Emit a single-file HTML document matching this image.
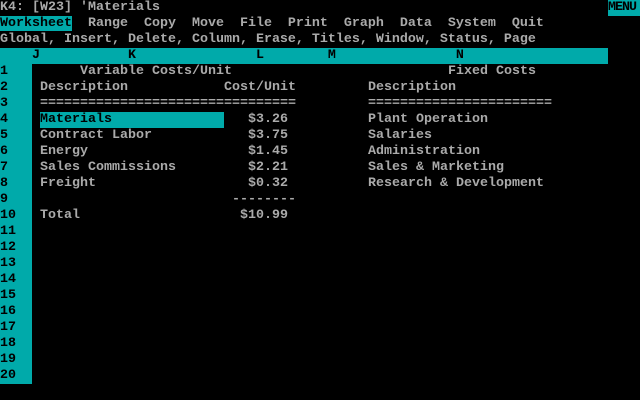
<!DOCTYPE html>
<html><head><style>
html,body{margin:0;padding:0;background:#000;}
body{width:640px;height:400px;position:relative;overflow:hidden;font-family:"Liberation Mono",monospace;font-size:13.33px;font-weight:bold;color:#aaa;}
.r{position:absolute;left:0;height:16px;line-height:16px;white-space:pre;}
.c{background:#00aaaa;color:#000;}
.hl{position:absolute;background:#00aaaa;color:#000;height:16px;line-height:16px;white-space:pre;}
.t{position:absolute;height:16px;line-height:16px;white-space:pre;}
</style></head><body>
<div class="r" style="top:0">K4: [W23] 'Materials</div>
<div class="hl" style="top:0;left:608px;width:32px;letter-spacing:-1px">MENU</div>
<div class="r" style="top:16px"><span class="c">Worksheet</span>  Range  Copy  Move  File  Print  Graph  Data  System  Quit</div>
<div class="r" style="top:32px">Global, Insert, Delete, Column, Erase, Titles, Window, Status, Page</div>
<div class="hl" style="top:48px;left:0;width:608px">    J           K               L        M               N</div>
<div style="position:absolute;left:0;top:64px;width:32px;height:320px;background:#00aaaa"></div>
<div class="hl" style="top:112px;left:40px;width:184px"></div>

<div class="t" style="top:64px;left:80px">Variable Costs/Unit</div>
<div class="t" style="top:64px;left:448px">Fixed Costs</div>
<div class="t" style="top:80px;left:40px">Description</div>
<div class="t" style="top:80px;left:224px">Cost/Unit</div>
<div class="t" style="top:80px;left:368px">Description</div>
<div class="t" style="top:96px;left:40px">================================</div>
<div class="t" style="top:96px;left:368px">=======================</div>

<div class="t" style="top:112px;left:40px;color:#000">Materials</div>
<div class="t" style="top:128px;left:40px">Contract Labor</div>
<div class="t" style="top:144px;left:40px">Energy</div>
<div class="t" style="top:160px;left:40px">Sales Commissions</div>
<div class="t" style="top:176px;left:40px">Freight</div>
<div class="t" style="top:208px;left:40px">Total</div>

<div class="t" style="top:112px;left:248px">$3.26</div>
<div class="t" style="top:128px;left:248px">$3.75</div>
<div class="t" style="top:144px;left:248px">$1.45</div>
<div class="t" style="top:160px;left:248px">$2.21</div>
<div class="t" style="top:176px;left:248px">$0.32</div>
<div class="t" style="top:192px;left:232px">--------</div>
<div class="t" style="top:208px;left:240px">$10.99</div>

<div class="t" style="top:112px;left:368px">Plant Operation</div>
<div class="t" style="top:128px;left:368px">Salaries</div>
<div class="t" style="top:144px;left:368px">Administration</div>
<div class="t" style="top:160px;left:368px">Sales &amp; Marketing</div>
<div class="t" style="top:176px;left:368px">Research &amp; Development</div>

<pre class="r" style="top:64px;margin:0;font:inherit;line-height:16px;color:#000">1
2
3
4
5
6
7
8
9
10
11
12
13
14
15
16
17
18
19
20</pre>
</body></html>
